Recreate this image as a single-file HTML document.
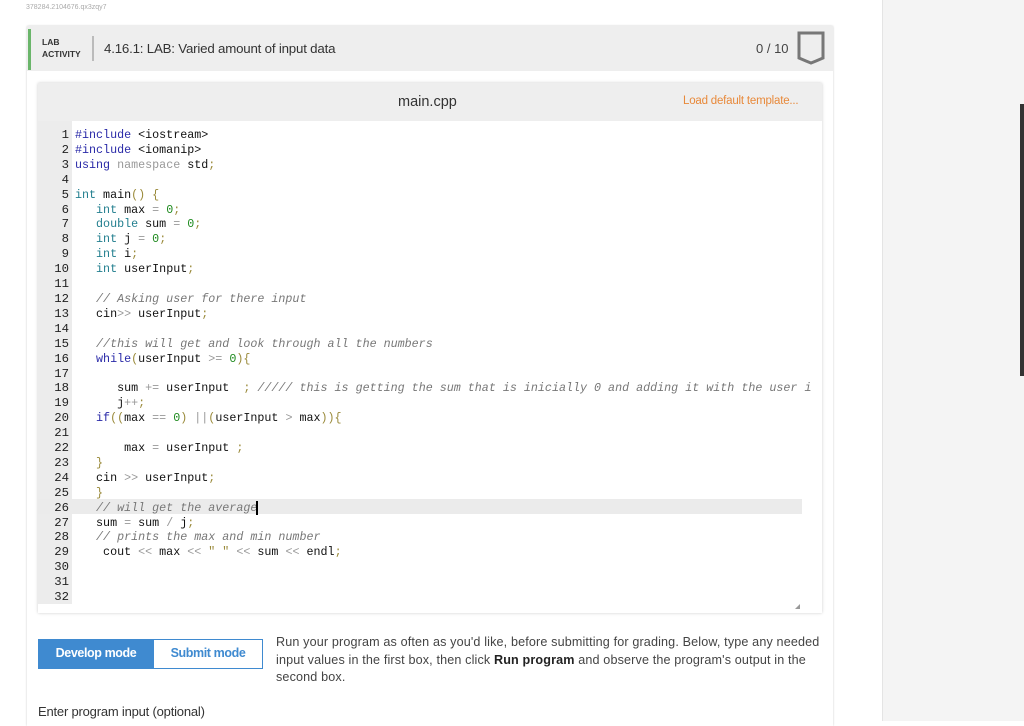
<!DOCTYPE html>
<html><head><meta charset="utf-8"><style>
body{margin:0;width:1024px;height:721px;background:#fff;position:relative;overflow:hidden;font-family:"Liberation Sans",sans-serif;}
.abs{position:absolute}
.code{font-family:"Liberation Mono",monospace;font-size:11.7px;line-height:14.9px;white-space:pre;color:#111}
.k{color:#2a2aa8}.t{color:#237f8f}.n{color:#1e8a1e}.p{color:#9a8a3a}.c{color:#777;font-style:italic}.o{color:#999}
</style></head><body>
<div class="abs" style="left:882px;top:0;width:142px;height:721px;background:#f4f4f4;border-left:1px solid #e4e4e4"></div>
<div class="abs" style="left:1020px;top:104px;width:4px;height:272px;background:#333"></div>
<div class="abs" style="left:26px;top:4px;font-size:7px;color:#aaa">378284.2104676.qx3zqy7</div>
<div class="abs" style="left:27px;top:26px;width:806px;height:700px;background:#fff;box-shadow:0 0 2px #ccc"></div>
<div class="abs" style="left:27px;top:26px;width:806px;height:45px;background:#eeeeee"></div>
<div class="abs" style="left:28px;top:29px;width:3px;height:41px;background:#6ab56a"></div>
<div class="abs" style="left:42px;top:36px;font-size:8.5px;font-weight:bold;color:#333;line-height:12px">LAB<br>ACTIVITY</div>
<div class="abs" style="left:92px;top:36px;width:2px;height:25px;background:#bbb"></div>
<div class="abs" style="left:104px;top:41px;font-size:13.3px;color:#333;letter-spacing:-0.2px">4.16.1: LAB: Varied amount of input data</div>
<div class="abs" style="left:756px;top:41px;font-size:13px;color:#444">0 / 10</div>
<svg class="abs" style="left:796px;top:30px" width="30" height="36"><path d="M3 3H27V28L20 31 15 33 10 31 3 28Z" fill="none" stroke="#777" stroke-width="3"/></svg>
<div class="abs" style="left:38px;top:83px;width:784px;height:530px;background:#fff;box-shadow:0 0 3px #ccc"></div>
<div class="abs" style="left:38px;top:83px;width:784px;height:38px;background:#eeeeee"></div>
<div class="abs" style="left:398px;top:94px;font-size:14.5px;color:#333">main.cpp</div>
<div class="abs" style="left:683px;top:95px;font-size:11.5px;color:#e8893a;letter-spacing:-0.2px">Load default template...</div>
<div class="abs" style="left:38px;top:121px;width:34px;height:483px;background:#ececec"></div>
<div class="abs" style="left:38px;top:499px;width:764px;height:15px;background:#ebebeb"></div>
<div class="abs code" style="left:38px;top:128px;width:31px;text-align:right;color:#222;font-size:12.3px">1
2
3
4
5
6
7
8
9
10
11
12
13
14
15
16
17
18
19
20
21
22
23
24
25
26
27
28
29
30
31
32</div>
<div class="abs code" style="left:75px;top:128px"><span class="k">#include</span> &lt;iostream&gt;
<span class="k">#include</span> &lt;iomanip&gt;
<span class="k">using</span> <span class="o">namespace</span> std<span class="p">;</span>

<span class="t">int</span> main<span class="p">()</span> <span class="p">{</span>
   <span class="t">int</span> max <span class="o">=</span> <span class="n">0</span><span class="p">;</span>
   <span class="t">double</span> sum <span class="o">=</span> <span class="n">0</span><span class="p">;</span>
   <span class="t">int</span> j <span class="o">=</span> <span class="n">0</span><span class="p">;</span>
   <span class="t">int</span> i<span class="p">;</span>
   <span class="t">int</span> userInput<span class="p">;</span>

   <span class="c">// Asking user for there input</span>
   cin<span class="o">&gt;&gt;</span> userInput<span class="p">;</span>

   <span class="c">//this will get and look through all the numbers</span>
   <span class="k">while</span><span class="p">(</span>userInput <span class="o">&gt;=</span> <span class="n">0</span><span class="p">){</span>

      sum <span class="o">+=</span> userInput  <span class="p">;</span> <span class="c">///// this is getting the sum that is inicially 0 and adding it with the user i</span>
      j<span class="o">++</span><span class="p">;</span>
   <span class="k">if</span><span class="p">((</span>max <span class="o">==</span> <span class="n">0</span><span class="p">)</span> <span class="o">||</span><span class="p">(</span>userInput <span class="o">&gt;</span> max<span class="p">)){</span>

       max <span class="o">=</span> userInput <span class="p">;</span>
   <span class="p">}</span>
   cin <span class="o">&gt;&gt;</span> userInput<span class="p">;</span>
   <span class="p">}</span>
   <span class="c">// will get the average</span><span style="border-left:2px solid #000;margin-left:-1px"> </span>
   sum <span class="o">=</span> sum <span class="o">/</span> j<span class="p">;</span>
   <span class="c">// prints the max and min number</span>
    cout <span class="o">&lt;&lt;</span> max <span class="o">&lt;&lt;</span> <span class="p">" "</span> <span class="o">&lt;&lt;</span> sum <span class="o">&lt;&lt;</span> endl<span class="p">;</span></div>
<div class="abs" style="left:795px;top:604px;width:0;height:0;border-left:5px solid transparent;border-bottom:5px solid #999"></div>
<div class="abs" style="left:38px;top:639px;width:225px;height:30px;border:1px solid #3f8ad0;box-sizing:border-box;background:#fff"></div>
<div class="abs" style="left:38px;top:639px;width:116px;height:30px;background:#3f8ad0;color:#fff;font-weight:bold;font-size:12.5px;line-height:28px;text-align:center;letter-spacing:-0.4px">Develop mode</div>
<div class="abs" style="left:154px;top:639px;width:108px;height:30px;color:#3f8ad0;font-weight:bold;font-size:12.5px;line-height:28px;text-align:center;letter-spacing:-0.4px">Submit mode</div>
<div class="abs" style="left:276px;top:634px;white-space:nowrap;font-size:12.6px;line-height:17.5px;color:#444;letter-spacing:0.14px">Run your program as often as you'd like, before submitting for grading. Below, type any needed<br>input values in the first box, then click <b style="color:#222">Run program</b> and observe the program's output in the<br>second box.</div>
<div class="abs" style="left:38px;top:704px;font-size:13px;color:#333;letter-spacing:-0.2px">Enter program input (optional)</div>
</body></html>
